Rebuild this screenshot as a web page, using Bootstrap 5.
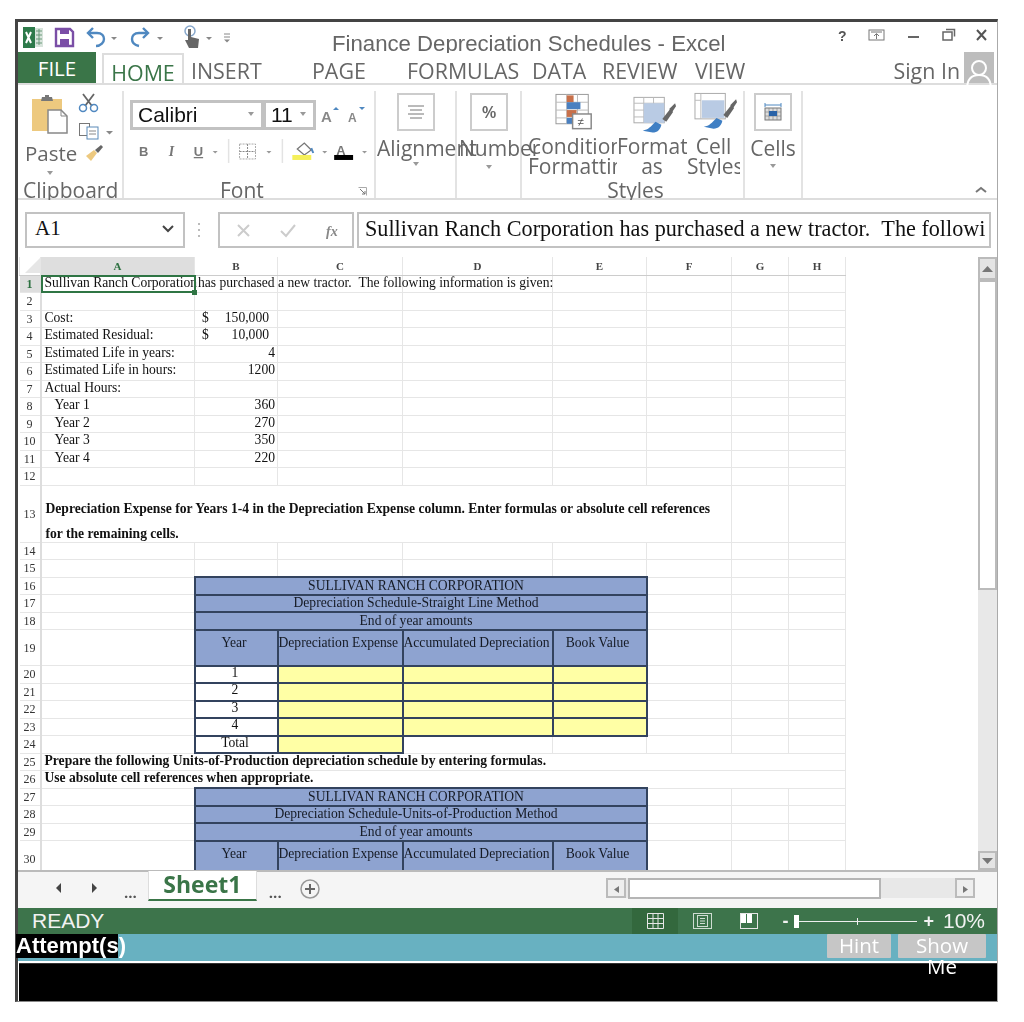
<!DOCTYPE html>
<html lang="en">
<head>
<meta charset="utf-8">
<title>Finance Depreciation Schedules - Excel</title>
<link href="https://cdn.jsdelivr.net/npm/bootstrap@5.3.0/dist/css/bootstrap.min.css" rel="stylesheet">
<style>
html,body{margin:0;background:#fff;overflow:hidden}
.xl-app{width:983px;height:983px;margin:19px 0 0 15px;border-top:3px solid #444;border-left:3px solid #444;border-right:1px solid #aaa;border-bottom:1px solid #888;display:flex;flex-direction:column;filter:blur(.45px);font-family:"Open Sans",sans-serif;color:#666;box-sizing:border-box}
.xl-title{height:30px;flex:none;overflow:visible}
.xl-qat{width:314px;flex:none;padding-left:4px}
.xl-doc{font:22.2px/1 "Liberation Sans",sans-serif;color:#666;margin-top:11px;height:20px;overflow:hidden;white-space:nowrap}
.xl-win{margin-left:auto;margin-right:10px;margin-top:3px;height:22px}
.xl-tabs{height:33px;flex:none;border-bottom:2px solid #ddd;font-size:21.4px;line-height:37px;white-space:nowrap}
.xl-tabs span{display:block;flex:none}
.xl-tabs .xl-file{background:#3a7548;color:#fff;width:78px;height:31px;text-align:center;font-size:20.5px;line-height:33px}
.xl-tabs .xl-home{color:#3a7548;border:2px solid #ddd;border-bottom:0;margin-left:6px;width:82px;text-align:center;margin-top:1px;height:30px;line-height:35px;overflow:hidden}
.xl-w1{margin-left:7px;width:121px}.xl-w2{width:95px}.xl-w3{width:125px}.xl-w4{width:70px}.xl-w5{width:93px}
.xl-tabs .xl-sign{margin-left:auto;margin-right:4px}
.xl-user{width:30px;height:31px;background:#bdbdbd;margin-right:3px;flex:none}
.xl-ribbon{height:115px;flex:none;border-bottom:2px solid #ddd;font-size:21px;line-height:24px}
.xl-grp{flex:none;height:107px;margin-top:6px;border-right:2px solid #e3e3e3;white-space:nowrap;display:flex;flex-direction:column}
.xl-grp>*{flex:none}
.xl-g1{width:106px}.xl-g2{width:252px}.xl-g3{width:81px}.xl-g4{width:65px}.xl-g5{width:223px}.xl-g6{width:58px}
.xl-lab{margin-top:auto;margin-bottom:-2px;height:22px;overflow:hidden;text-align:center;line-height:24px}
.xl-lab-clip{text-align:left;padding-left:5px}
.xl-lab-font{padding-left:96px;text-align:left;display:flex;justify-content:space-between;padding-right:6px}
.xl-lab-sty{padding-left:6px}
.xl-launch{margin-top:9px}
.xl-btnbox{width:38px;height:38px;border:2px solid #ccc;display:flex;align-items:center;justify-content:center;font-size:17px;color:#666;font-weight:600}
.xl-bb3{margin:2px 0 0 21px}.xl-bb4{margin:2px 0 0 13px}.xl-bb6{margin:2px 0 0 9px}
.xl-combo{height:30px;border:3px solid #c2c2c2;font:21px/24px "Liberation Sans",sans-serif;color:#111;display:flex;align-items:center;justify-content:space-between;padding:0 5px}
.xl-cb1{width:134px}.xl-cb2{width:53px;margin-left:-1px}
.xl-caret{width:0;height:0;border:3px solid transparent;border-top:4px solid #999;display:inline-block;margin:0 2px;vertical-align:1px}
.xl-r1{padding:9px 0 0 6px}.xl-r2{padding:7px 0 0 15px;height:36px}
.xl-pasterow{padding-left:7px;font-size:20.5px;line-height:24px;height:24px}
.xl-pcaret{padding-left:27px;line-height:10px;margin-top:1px}
.xl-sp3{margin:5px 0 0 1px}.xl-sp4{margin:5px 0 0 2px}
.xl-cr3{padding-left:35px;line-height:8px;margin-top:-2px}.xl-cr4{padding-left:27px;line-height:8px;margin-top:1px}
.xl-icons{height:44px}
.xl-ic1{margin-left:33px}.xl-ic2{margin-left:41px;margin-top:2px}.xl-ic3{margin-left:12px}
.xl-stylelabs{line-height:20px;padding:1px 0 0 6px}
.xl-sl1{width:89px;height:40px;overflow:hidden}
.xl-sl2{width:70px;height:40px;overflow:hidden;background:#fff;text-align:center}
.xl-sl3{width:53px;height:40px;overflow:hidden;text-align:center}
.xl-cellslab{margin-top:5px;line-height:24px}
.xl-cellscr{line-height:8px}
.xl-chev{margin-left:auto;margin-right:10px;align-self:flex-end;margin-bottom:4px}
.xl-fbar{height:50px;flex:none;padding:12px 6px 2px 7px}
.xl-fbox{height:36px;border:2px solid #c2c2c2;background:#fff;display:flex;align-items:center}
.xl-name{width:160px;font:21px "Liberation Serif",serif;color:#111;padding:0 8px 3px;justify-content:space-between}
.xl-fx{width:136px}
.xl-input{width:634px;margin-left:3px;font:22.2px "Liberation Serif",serif;color:#111;padding:0 0 3px 6px;white-space:nowrap}
.xl-input span{display:block;width:621px;overflow:hidden}
.xl-sheet{height:620px;flex:none;min-height:0;padding-top:7px;overflow:hidden}
.xl-gridwrap{width:960px;flex:none;overflow:hidden;height:613px;padding-left:1px}
.xl-table{table-layout:fixed;border-collapse:collapse;width:826px;font:13.6px/14px "Liberation Serif",serif;color:#111}
.xl-c0{width:21px}.xl-ca{width:154px}.xl-cb{width:83px}.xl-cc{width:125px}.xl-cd{width:150px}.xl-ce{width:94px}.xl-cf{width:85px}.xl-cg{width:57px}
.xl-table td,.xl-table th{border:1px solid #e6e6e6;padding:0 2px 2px 3px;height:17.5px;white-space:nowrap;overflow:visible;vertical-align:middle;font-weight:400}
.xl-table th{text-align:center;color:#444;font-weight:700;background:#fff}
.xl-table thead th{border-top:0;height:18px;font-size:11px;border-bottom:1px solid #ccc;padding:0}
.xl-table tbody th{font-weight:400;font-size:12px;color:#333;padding:0;border-left:0;border-right:2px solid #ddd}
.xl-table .xl-sel{background:#dedede;color:#2c7040;font-weight:700}
.xl-table .xl-b{font-weight:700}
.xl-table .xl-r{text-align:right}
.xl-table .xl-acc{padding-left:7px;padding-right:8px}
.xl-acc div{display:flex;justify-content:space-between}
.xl-table .xl-i{padding-left:13px}
.xl-table td.xl-m13{line-height:25px;padding:0 0 0 4px;height:57px;vertical-align:top}
.xl-m13 div{height:56px;padding-top:10px}
.xl-table td.xl-blue{background:#8ea3d0;border:2px solid #33435e;text-align:center;color:#151a24;padding:0 4px 0 0}
.xl-table td.xl-bm{padding-right:9px}
.xl-table td.xl-yel{background:#ffffa5;border:2px solid #33435e;padding:0}
.xl-table td.xl-wht{background:#fff;border:2px solid #33435e;text-align:center;padding:0 2px 0 0;line-height:12px}
.xl-tall td,.xl-tall th{height:36px!important}
.xl-table .xl-tall td.xl-blue{vertical-align:top;padding:5px 4px 0 0}
.xl-top td.xl-wht{vertical-align:top}
.xl-a1{position:relative}
.xl-a1::after{content:"";position:absolute;left:-1px;top:-1px;right:-2px;bottom:-1px;border:2px solid #2f7544}
.xl-a1::before{content:"";position:absolute;right:-3px;bottom:-3px;width:5px;height:5px;background:#2f7544;z-index:1}
.xl-vs{width:19px;flex:none;margin-left:auto;background:#e8e8e8;height:613px;display:flex;flex-direction:column}
.xl-sbtn{background:#e4e4e4;border:2px solid #bbb;display:flex;align-items:center;justify-content:center}
.xl-sb-up{height:23px}.xl-sb-dn{height:19px;margin-top:auto}
.xl-vthumb{height:310px;background:#fff;border:2px solid #bbb}
.xl-tabbar{height:38px;flex:none;background:#f5f5f5;border-top:2px solid #bbb;white-space:nowrap}
.xl-sheettab{width:109px;height:30px;background:#fff;border-bottom:2px solid #3a7548;color:#3a7548;font:700 23px/27px "Open Sans",sans-serif;text-align:center;margin-top:-1px;margin-left:11px;border-left:1px solid #ddd;border-right:1px solid #ddd}
.xl-nav{height:32px;padding-left:38px}
.xl-after{height:34px}
.xl-arrow{width:0;height:0;border:5px solid transparent}
.xl-al{border-right-color:#444;border-left:0}
.xl-ar{border-left-color:#444;border-right:0;margin-left:31px}
.xl-dots{font-size:15px;color:#555;font-weight:700;line-height:1}
.xl-d1{margin-left:27px;margin-top:8px}.xl-d2{margin-left:12px;margin-top:6px}
.xl-plus{margin-left:17px}
.xl-hs{margin-left:auto;margin-right:22px;width:369px;height:20px;background:#e8e8e8;margin-top:6px}
.xl-hthumb{width:253px;height:21px;background:#fff;border:2px solid #b5b5b5;margin-left:2px}
.xl-hbtn{width:20px;height:20px;border:2px solid #bbb;background:#eee;display:flex;align-items:flex-end;justify-content:center;padding-bottom:3px}
.xl-hbtn-r{margin-left:auto}
.xl-status{height:26px;flex:none;background:#3d744b;color:#f2f2f2;font:21px/26px "Liberation Sans",sans-serif;padding-left:14px;white-space:nowrap}
.xl-vw{height:26px;display:flex;align-items:center;justify-content:center;width:46px}
.xl-vw-on{background:#33683d}
.xl-vw-2{width:48px}
.xl-minus{margin-left:10px;font-weight:700;font-size:18px}
.xl-slider{width:122px;height:1px;background:#eee;position:relative;margin-left:7px}
.xl-thumb{position:absolute;left:-1px;top:-6px;width:5px;height:13px;background:#fff}
.xl-tick{position:absolute;left:62px;top:-3px;width:1px;height:7px;background:#eee}
.xl-plusz{margin-left:6px;font-weight:700;font-size:18px}
.xl-pct{margin:0 12px 0 9px}
.xl-attempt{height:27px;flex:none;background:#68b1c1;color:#fff}
.xl-att{background:#000;width:102px;height:24px;margin-left:-2px;font:700 22px/24px "Liberation Sans",sans-serif;white-space:nowrap}
.xl-hintbtn{background:#c6c6c6;color:#fff;height:24px;border-radius:1px;text-align:center;font:20.5px/21px "Open Sans",sans-serif;flex:none;padding-top:1px;position:relative;z-index:1}
.xl-hint{width:64px;margin-left:auto}
.xl-show{width:88px;margin:0 11px 0 7px}
.xl-black{flex:1;background:#000;margin-top:2px;margin-left:1px;border-top:1px solid #333}
</style>
</head>
<body>
<div class="xl-app">
 <div class="xl-title d-flex">
  <div class="xl-qat d-flex align-items-center">
   <svg width="225" height="28" viewBox="0 0 225 28">
    <rect x="1" y="5" width="20" height="19" fill="#d8e4dc"/><rect x="1" y="4" width="12" height="21" fill="#2d7a4a"/><path d="M4 9l5 11M9 9l-5 11" stroke="#fff" stroke-width="2"/><path d="M14 8h6M14 12h6M14 16h6M14 20h6M17 6v16" stroke="#6a9a7a"/>
    <path d="M34 6h14l3 3v14H34z" fill="none" stroke="#7a4ea6" stroke-width="2.4"/><rect x="38" y="6" width="9" height="5" fill="#7a4ea6"/><rect x="38" y="16" width="9" height="7" fill="#7a4ea6"/>
    <path d="M71 5l-5 5 5 5" fill="none" stroke="#4f88c0" stroke-width="2.4"/><path d="M67 10h8c5 0 7 3 7 6s-3 7-8 7" fill="none" stroke="#4f88c0" stroke-width="2.4"/><path d="M89 14l6 0-3 3z" fill="#888"/>
    <path d="M121 5l5 5-5 5" fill="none" stroke="#4f88c0" stroke-width="2.4"/><path d="M125 10h-8c-5 0-7 3-7 6s2 6 7 7" fill="none" stroke="#4f88c0" stroke-width="2.4"/><path d="M135 14l6 0-3 3z" fill="#888"/>
    <circle cx="168" cy="8" r="5" fill="none" stroke="#88a8cc" stroke-width="1.500"/><path d="M166 6v11l-3 0 4 8h9l1-9-8-2V6z" fill="#666"/><path d="M184 14l6 0-3 3z" fill="#888"/><path d="M202 11h6M202 14h6" stroke="#888"/><path d="M202 16.500l6 0-3 3z" fill="#888"/>
   </svg>
  </div>
  <div class="xl-doc">Finance Depreciation Schedules - Excel</div>
  <div class="xl-win d-flex align-items-center">
   <svg width="150" height="20" viewBox="0 0 150 20">
    <text x="1" y="15" font-family="Liberation Sans" font-weight="700" font-size="14" fill="#555">?</text>
    <rect x="32" y="4" width="15" height="10" fill="none" stroke="#777"/><path d="M34 6h11" stroke="#777"/><path d="M39.500 13V8M37 10l2.500-2.500 2.500 2.500" fill="none" stroke="#777"/>
    <path d="M71 11h11" stroke="#666" stroke-width="2"/>
    <rect x="106" y="6" width="9" height="8" fill="none" stroke="#666" stroke-width="1.500"/><path d="M109 3.500h8.500v7" fill="none" stroke="#666" stroke-width="1.500"/>
    <path d="M140 4l9 10M149 4l-9 10" stroke="#555" stroke-width="2"/>
   </svg>
  </div>
 </div>
 <div class="xl-tabs d-flex">
  <span class="xl-file">FILE</span>
  <span class="xl-home">HOME</span>
  <span class="xl-w1">INSERT</span>
  <span class="xl-w2">PAGE</span>
  <span class="xl-w3">FORMULAS</span>
  <span class="xl-w4">DATA</span>
  <span class="xl-w5">REVIEW</span>
  <span>VIEW</span>
  <span class="xl-sign">Sign In</span>
  <div class="xl-user"><svg width="30" height="31" viewBox="0 0 30 31"><circle cx="15" cy="10" r="7" fill="none" stroke="#fff" stroke-width="2"/><path d="M3 31c0-11 5-14 12-14s12 3 12 14" fill="none" stroke="#fff" stroke-width="2"/></svg></div>
 </div>
 <div class="xl-ribbon d-flex">
  <div class="xl-grp xl-g1">
   <svg width="104" height="50" viewBox="0 0 104 50">
    <path d="M14 8h30v32H14z" fill="#edc97f"/><path d="M24 6h3v-2h4v2h3l1 4H23z" fill="#777"/><path d="M30 19h13l6 6v17H30z" fill="#fff" stroke="#888" stroke-width="1.500"/><path d="M43 19v6h6" fill="none" stroke="#888"/>
    <path d="M65 3l9 12M76 3l-9 12" stroke="#666" stroke-width="1.800"/><circle cx="65" cy="17" r="3.500" fill="none" stroke="#4f88c0" stroke-width="1.500"/><circle cx="76" cy="17" r="3.500" fill="none" stroke="#4f88c0" stroke-width="1.500"/>
    <rect x="61.500" y="32.500" width="10" height="12" fill="#fff" stroke="#777"/><rect x="69" y="36" width="11" height="12" fill="#fff" stroke="#5a8ab8"/><path d="M71 40h7M71 43h7" stroke="#888"/>
    <path d="M88 40l7 0-3.500 3.500z" fill="#888"/>
   </svg>
   <div class="xl-pasterow d-flex align-items-center">Paste&nbsp;<svg width="22" height="18" viewBox="0 0 22 18"><path d="M3 12l8-6 3 3-6 8z" fill="#edc97f"/><path d="M12 6l6-5 2 2-5 6z" fill="#666"/></svg></div>
   <div class="xl-pcaret"><span class="xl-caret"></span></div>
   <div class="xl-lab xl-lab-clip">Clipboard</div>
  </div>
  <div class="xl-grp xl-g2">
   <div class="d-flex align-items-center xl-r1">
    <div class="xl-combo xl-cb1">Calibri <span class="xl-caret"></span></div>
    <div class="xl-combo xl-cb2">11 <span class="xl-caret"></span></div>
    <svg width="56" height="24" viewBox="0 0 56 24"><text x="5" y="19" font-family="Liberation Sans" font-size="15" font-weight="700" fill="#888">A</text><path d="M17 7l3-3 3 3z" fill="#4f88c0"/><text x="32" y="19" font-family="Liberation Sans" font-size="12" font-weight="700" fill="#888">A</text><path d="M43 4h6l-3 3z" fill="#4f88c0"/></svg>
   </div>
   <div class="d-flex align-items-center xl-r2">
    <svg width="236" height="26" viewBox="0 0 236 26">
     <text x="0" y="17" font-family="Liberation Sans" font-weight="700" font-size="13" fill="#777">B</text>
     <text x="30" y="17" font-family="Liberation Serif" font-style="italic" font-weight="700" font-size="14" fill="#777">I</text>
     <text x="55" y="17" font-family="Liberation Sans" font-weight="700" font-size="13" fill="#777" text-decoration="underline">U</text>
     <path d="M74 12l5 0-2.500 2.500z" fill="#999"/>
     <path d="M90 0v24" stroke="#e3e3e3" stroke-width="1.500"/>
     <rect x="101" y="5" width="16" height="15" fill="none" stroke="#aaa" stroke-dasharray="2 1"/><path d="M109 5v15M101 12.500h16" stroke="#888" stroke-dasharray="2 1"/>
     <path d="M128 12l5 0-2.500 2.500z" fill="#999"/>
     <path d="M144 0v24" stroke="#e3e3e3" stroke-width="1.500"/>
     <path d="M159 10l7-6 7 7-7 5z" fill="none" stroke="#777" stroke-width="1.300"/><path d="M173 9l2 5" stroke="#4f88c0" stroke-width="2"/><rect x="154" y="16" width="19" height="5" fill="#f5f05a"/>
     <path d="M184 12l5 0-2.500 2.500z" fill="#999"/>
     <text x="198" y="16" font-family="Liberation Sans" font-weight="700" font-size="13" fill="#777">A</text><rect x="196" y="16" width="19" height="5" fill="#000"/>
     <path d="M224 12l5 0-2.500 2.500z" fill="#999"/>
    </svg>
   </div>
   <div class="xl-lab xl-lab-font"><span>Font</span><svg class="xl-launch" width="10" height="10" viewBox="0 0 10 10"><path d="M.5 .5h8v8" fill="none" stroke="#aaa"/><path d="M2 2l5 5M4 7h3V4" fill="none" stroke="#777"/></svg></div>
  </div>
  <div class="xl-grp xl-g3">
   <div class="xl-btnbox xl-bb3"><svg width="18" height="14" viewBox="0 0 18 14"><path d="M1 1h16M3 5h12M1 9h16M3 13h12" stroke="#777"/></svg></div>
   <div class="xl-sp3">Alignment</div>
   <div class="xl-cr3"><span class="xl-caret"></span></div>
  </div>
  <div class="xl-grp xl-g4">
   <div class="xl-btnbox xl-bb4">%</div>
   <div class="xl-sp4">Number</div>
   <div class="xl-cr4"><span class="xl-caret"></span></div>
  </div>
  <div class="xl-grp xl-g5">
   <div class="d-flex xl-icons">
    <svg class="xl-ic1" width="38" height="44" viewBox="0 0 38 44"><rect x="1" y="3" width="33" height="30" fill="#fff" stroke="#999"/><path d="M1 11h33M1 19h33M1 27h33M12 3v30M23 3v30" stroke="#bbb"/><rect x="12" y="4" width="7" height="7" fill="#c8704a"/><rect x="12" y="11" width="14" height="7" fill="#4a80c0"/><rect x="12" y="19" width="10" height="7" fill="#c8704a"/><rect x="12" y="27" width="6" height="6" fill="#4a80c0"/><rect x="18" y="23" width="19" height="15" fill="#fff" stroke="#888" stroke-width="1.500"/><text x="23" y="35" font-family="Liberation Sans" font-size="12" fill="#555">≠</text></svg>
    <svg class="xl-ic2" width="50" height="42" viewBox="0 0 50 42"><rect x="1" y="4" width="31" height="26" fill="#fff" stroke="#aaa"/><path d="M1 10h31M1 17h31M1 24h31M11 4v26M21 4v26" stroke="#bbb"/><rect x="11" y="10" width="21" height="20" fill="#b9cbe4"/><path d="M30 26l8-10 3 3-7 10z" fill="#666"/><path d="M37 16l6-6 1 3-4 6z" fill="#666"/><path d="M10 38c6-1 8-4 13-9l6 3c-1 5-4 8-9 8z" fill="#3f7fc4"/></svg>
    <svg class="xl-ic3" width="50" height="44" viewBox="0 0 50 44"><rect x="1" y="2" width="31" height="26" fill="#fff" stroke="#aaa"/><path d="M1 9h6M7 2v26" stroke="#bbb"/><rect x="8" y="9" width="23" height="18" fill="#b9cbe4"/><path d="M30 24l8-10 3 3-7 10z" fill="#666"/><path d="M37 14l6-6 1 3-4 6z" fill="#666"/><path d="M10 36c6-1 8-4 13-9l6 3c-1 5-4 8-9 8z" fill="#3f7fc4"/></svg>
   </div>
   <div class="d-flex xl-stylelabs">
    <div class="xl-sl1">Conditional<br>Formatting</div>
    <div class="xl-sl2">Format<br>as</div>
    <div class="xl-sl3">Cell<br>Styles</div>
   </div>
   <div class="xl-lab xl-lab-sty">Styles</div>
  </div>
  <div class="xl-grp xl-g6">
   <div class="xl-btnbox xl-bb6"><svg width="20" height="18" viewBox="0 0 20 18"><rect x="2" y="5" width="16" height="12" fill="#ddd" stroke="#777"/><path d="M6 5v12M10 5v12M14 5v12M2 9h16M2 13h16" stroke="#888" stroke-width=".7"/><rect x="6" y="8" width="8" height="5" fill="#2a63a8"/><path d="M2 2h16M2 0v4M18 0v4" stroke="#4f88c0"/></svg></div>
   <div class="text-center xl-cellslab">Cells</div>
   <div class="text-center xl-cellscr"><span class="xl-caret"></span></div>
  </div>
  <svg class="xl-chev" width="12" height="8" viewBox="0 0 12 8"><path d="M1 6l5-4 5 4" fill="none" stroke="#777" stroke-width="2"/></svg>
 </div>
 <div class="xl-fbar d-flex align-items-center">
  <div class="xl-fbox xl-name">A1 <svg width="14" height="9" viewBox="0 0 14 9"><path d="M2 2l5 5 5-5" fill="none" stroke="#444" stroke-width="2"/></svg></div>
  <svg width="33" height="20" viewBox="0 0 33 20"><path d="M14 3v2M14 9v2M14 15v2" stroke="#bbb" stroke-width="2"/></svg>
  <div class="xl-fbox xl-fx"><svg width="132" height="30" viewBox="0 0 132 30"><path d="M18 10l11 11M29 10l-11 11" stroke="#ccc" stroke-width="2"/><path d="M61 16l5 5 9-11" fill="none" stroke="#ccc" stroke-width="2"/><text x="106" y="21" font-family="Liberation Serif" font-style="italic" font-weight="700" font-size="14" fill="#888">fx</text></svg></div>
  <div class="xl-fbox xl-input"><span>Sullivan Ranch Corporation has purchased a new tractor. &nbsp;The following information is given:</span></div>
 </div>
 <div class="xl-sheet d-flex">
  <div class="xl-gridwrap">
   <table class="xl-table">
    <colgroup><col class="xl-c0"><col class="xl-ca"><col class="xl-cb"><col class="xl-cc"><col class="xl-cd"><col class="xl-ce"><col class="xl-cf"><col class="xl-cg"><col class="xl-cg"></colgroup>
    <thead><tr><th><svg width="15" height="15" viewBox="0 0 15 15" class="d-block ms-auto"><path d="M15 0v15H0z" fill="#e6e6e6"/></svg></th><th class="xl-sel">A</th><th>B</th><th>C</th><th>D</th><th>E</th><th>F</th><th>G</th><th>H</th></tr></thead>
    <tbody>
     <tr><th class="xl-sel">1</th><td class="xl-a1">Sullivan Ranch Corporation</td><td>has purchased a new tractor. &nbsp;The following information is given:</td><td></td><td></td><td></td><td></td><td></td><td></td></tr>
     <tr><th>2</th><td></td><td></td><td></td><td></td><td></td><td></td><td></td><td></td></tr>
     <tr><th>3</th><td>Cost:</td><td class="xl-acc"><div><span>$</span><span>150,000</span></div></td><td></td><td></td><td></td><td></td><td></td><td></td></tr>
     <tr><th>4</th><td>Estimated Residual:</td><td class="xl-acc"><div><span>$</span><span>10,000</span></div></td><td></td><td></td><td></td><td></td><td></td><td></td></tr>
     <tr><th>5</th><td>Estimated Life in years:</td><td class="xl-r">4</td><td></td><td></td><td></td><td></td><td></td><td></td></tr>
     <tr><th>6</th><td>Estimated Life in hours:</td><td class="xl-r">1200</td><td></td><td></td><td></td><td></td><td></td><td></td></tr>
     <tr><th>7</th><td>Actual Hours:</td><td></td><td></td><td></td><td></td><td></td><td></td><td></td></tr>
     <tr><th>8</th><td class="xl-i">Year 1</td><td class="xl-r">360</td><td></td><td></td><td></td><td></td><td></td><td></td></tr>
     <tr><th>9</th><td class="xl-i">Year 2</td><td class="xl-r">270</td><td></td><td></td><td></td><td></td><td></td><td></td></tr>
     <tr><th>10</th><td class="xl-i">Year 3</td><td class="xl-r">350</td><td></td><td></td><td></td><td></td><td></td><td></td></tr>
     <tr><th>11</th><td class="xl-i">Year 4</td><td class="xl-r">220</td><td></td><td></td><td></td><td></td><td></td><td></td></tr>
     <tr><th>12</th><td></td><td></td><td></td><td></td><td></td><td></td><td></td><td></td></tr>
     <tr><th>13</th><td colspan="6" class="xl-b xl-m13"><div>Depreciation Expense for Years 1-4 in the Depreciation Expense column. Enter formulas or absolute cell references<br>for the remaining cells.</div></td><td></td><td></td></tr>
     <tr><th>14</th><td></td><td></td><td></td><td></td><td></td><td></td><td></td><td></td></tr>
     <tr><th>15</th><td></td><td></td><td></td><td></td><td></td><td></td><td></td><td></td></tr>
     <tr><th>16</th><td></td><td colspan="4" class="xl-blue xl-bm">SULLIVAN RANCH CORPORATION</td><td></td><td></td><td></td></tr>
     <tr><th>17</th><td></td><td colspan="4" class="xl-blue xl-bm">Depreciation Schedule-Straight Line Method</td><td></td><td></td><td></td></tr>
     <tr><th>18</th><td></td><td colspan="4" class="xl-blue xl-bm">End of year amounts</td><td></td><td></td><td></td></tr>
     <tr class="xl-tall"><th>19</th><td></td><td class="xl-blue">Year</td><td class="xl-blue">Depreciation Expense</td><td class="xl-blue">Accumulated Depreciation</td><td class="xl-blue">Book Value</td><td></td><td></td><td></td></tr>
     <tr class="xl-top"><th>20</th><td></td><td class="xl-wht">1</td><td class="xl-yel"></td><td class="xl-yel"></td><td class="xl-yel"></td><td></td><td></td><td></td></tr>
     <tr class="xl-top"><th>21</th><td></td><td class="xl-wht">2</td><td class="xl-yel"></td><td class="xl-yel"></td><td class="xl-yel"></td><td></td><td></td><td></td></tr>
     <tr class="xl-top"><th>22</th><td></td><td class="xl-wht">3</td><td class="xl-yel"></td><td class="xl-yel"></td><td class="xl-yel"></td><td></td><td></td><td></td></tr>
     <tr class="xl-top"><th>23</th><td></td><td class="xl-wht">4</td><td class="xl-yel"></td><td class="xl-yel"></td><td class="xl-yel"></td><td></td><td></td><td></td></tr>
     <tr class="xl-top"><th>24</th><td></td><td class="xl-wht">Total</td><td class="xl-yel"></td><td></td><td></td><td></td><td></td><td></td></tr>
     <tr><th>25</th><td colspan="8" class="xl-b">Prepare the following Units-of-Production depreciation schedule by entering formulas.</td></tr>
     <tr><th>26</th><td colspan="8" class="xl-b">Use absolute cell references when appropriate.</td></tr>
     <tr><th>27</th><td></td><td colspan="4" class="xl-blue xl-bm">SULLIVAN RANCH CORPORATION</td><td></td><td></td><td></td></tr>
     <tr><th>28</th><td></td><td colspan="4" class="xl-blue xl-bm">Depreciation Schedule-Units-of-Production Method</td><td></td><td></td><td></td></tr>
     <tr><th>29</th><td></td><td colspan="4" class="xl-blue xl-bm">End of year amounts</td><td></td><td></td><td></td></tr>
     <tr class="xl-tall"><th>30</th><td></td><td class="xl-blue">Year</td><td class="xl-blue">Depreciation Expense</td><td class="xl-blue">Accumulated Depreciation</td><td class="xl-blue">Book Value</td><td></td><td></td><td></td></tr>
    </tbody>
   </table>
  </div>
  <div class="xl-vs">
   <div class="xl-sbtn xl-sb-up"><svg width="11" height="6" viewBox="0 0 11 6"><path d="M0 6l5.500-6 5.500 6z" fill="#777"/></svg></div>
   <div class="xl-vthumb"></div>
   <div class="xl-sbtn xl-sb-dn"><svg width="11" height="6" viewBox="0 0 11 6"><path d="M0 0l5.500 6 5.500-6z" fill="#777"/></svg></div>
  </div>
 </div>
 <div class="xl-tabbar d-flex">
  <div class="d-flex align-items-center xl-nav">
   <span class="xl-arrow xl-al"></span>
   <span class="xl-arrow xl-ar"></span>
   <span class="xl-dots xl-d1">...</span>
  </div>
  <div class="xl-sheettab">Sheet1</div>
  <div class="d-flex align-items-center xl-after">
   <span class="xl-dots xl-d2">...</span>
   <svg class="xl-plus" width="22" height="22" viewBox="0 0 22 22"><circle cx="11" cy="11" r="9" fill="none" stroke="#999" stroke-width="1.500"/><path d="M6 11h10M11 6v10" stroke="#666" stroke-width="2"/></svg>
  </div>
  <div class="xl-hs d-flex">
   <div class="xl-hbtn"><svg width="5" height="7" viewBox="0 0 5 7"><path d="M5 0v7L0 3.500z" fill="#777"/></svg></div>
   <div class="xl-hthumb"></div>
   <div class="xl-hbtn xl-hbtn-r"><svg width="5" height="7" viewBox="0 0 5 7"><path d="M0 0v7l5-3.500z" fill="#777"/></svg></div>
  </div>
 </div>
 <div class="xl-status d-flex align-items-center">
  <span>READY</span>
  <div class="d-flex align-items-center ms-auto">
   <div class="xl-vw xl-vw-on"><svg width="17" height="16" viewBox="0 0 17 16"><path d="M.5 .5h16v15H.5zM.5 5.500h16M.5 10.500h16M6 .5v15M11 .5v15" fill="none" stroke="#e6e6e6"/></svg></div>
   <div class="xl-vw xl-vw-2"><svg width="19" height="16" viewBox="0 0 19 16"><rect x=".5" y=".5" width="18" height="15" fill="none" stroke="#cfdcd2"/><rect x="4.500" y="2.500" width="10" height="11" fill="none" stroke="#cfdcd2"/><path d="M7 5.500h5M7 8h5M7 10.500h5" stroke="#cfdcd2"/></svg></div>
   <div class="xl-vw"><svg width="18" height="16" viewBox="0 0 18 16"><rect x=".5" y=".5" width="17" height="15" fill="none" stroke="#e6e6e6"/><rect x="1" y="1" width="5" height="9" fill="#fff"/><rect x="7" y="1" width="5" height="9" fill="#fff"/></svg></div>
   <span class="xl-minus">-</span>
   <div class="xl-slider"><div class="xl-thumb"></div><div class="xl-tick"></div></div>
   <span class="xl-plusz">+</span>
   <span class="xl-pct">10%</span>
  </div>
 </div>
 <div class="xl-attempt d-flex">
  <div class="xl-att">Attempt(s)</div>
  <div class="xl-hintbtn xl-hint" role="button">Hint</div>
  <div class="xl-hintbtn xl-show" role="button">Show<br>Me</div>
 </div>
 <div class="xl-black"></div>
</div>
<script src="https://cdn.jsdelivr.net/npm/bootstrap@5.3.0/dist/js/bootstrap.bundle.min.js"></script>
</body>
</html>
